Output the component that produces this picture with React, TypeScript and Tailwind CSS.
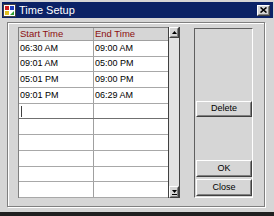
import React from "react";

const rows: [string, string][] = [
  ["06:30 AM", "09:00 AM"],
  ["09:01 AM", "05:00 PM"],
  ["05:01 PM", "09:00 PM"],
  ["09:01 PM", "06:29 AM"],
  ["", ""],
  ["", ""],
  ["", ""],
  ["", ""],
  ["", ""],
  ["", ""],
];

const font = { fontFamily: '"Liberation Sans", Arial, sans-serif' };

const Raised = ({ className = "", children }: { className?: string; children?: React.ReactNode }) => (
  <div className={`border border-t-white border-l-white border-r-[#404040] border-b-[#404040] bg-[#d6d6d6] ${className}`}>
    <div className="w-full h-full border border-t-[#d6d6d6] border-l-[#d6d6d6] border-r-[#808080] border-b-[#808080] flex items-center justify-center">
      {children}
    </div>
  </div>
);

const AppIcon = () => (
  <svg width="13" height="13" viewBox="0 0 13 13">
    <rect x="0.5" y="0.5" width="12" height="12" fill="#ffffff" stroke="#404040" />
    <rect x="2" y="2" width="4" height="4" fill="#d02020" />
    <rect x="7" y="2" width="4" height="4" fill="#2040c0" />
    <rect x="2" y="7" width="4" height="4" fill="#e0c020" />
    <path d="M7 11 L11 7 L11 11 Z" fill="#30a030" />
  </svg>
);

export default function App() {
  return (
    <div
      className="w-[274px] h-[216px] bg-[#d6d6d6] flex flex-col pt-[2px] pl-[2px] pr-[1px] border-b-[4px] border-b-[#202020]"
      style={font}
    >
      {/* title bar */}
      <div className="h-[16px] bg-[#0b2266] flex items-center pl-[1px] pr-[3px]">
        <AppIcon />
        <span className="ml-[3px] text-white text-[11px] leading-none">Time Setup</span>
        <div className="flex-1" />
        <Raised className="w-[13px] h-[11px]">
          <svg width="7" height="6" viewBox="0 0 7 6">
            <path d="M0.5 0.5 L6.5 5.5 M6.5 0.5 L0.5 5.5" stroke="#000" strokeWidth="1.6" />
          </svg>
        </Raised>
      </div>

      {/* body */}
      <div className="flex-1 pt-[4px] pl-[5px] pr-[8px] pb-[5px] flex">
        <div className="flex-1 border border-[#808080] shadow-[inset_1px_1px_0_#ffffff,1px_1px_0_#ffffff]">
          <div className="flex pl-[10px] pt-[4px]">
            {/* table */}
            <div className="flex h-[171px]">
              <div className="w-[150px] flex flex-col border-l border-t border-[#808080] bg-white">
                <div className="h-[13px] flex bg-[#d6d6d6] border-b border-[#a0a0a0]">
                  <div className="w-[75px] border-r border-[#a0a0a0] text-[9.5px] leading-[12px] text-[#8c0f0f] pl-[1px]">
                    Start Time
                  </div>
                  <div className="flex-1 text-[9.5px] leading-[12px] text-[#8c0f0f] pl-[1px]">End Time</div>
                </div>
                {rows.map((r, i) => (
                  <div
                    key={i}
                    className={`h-[15.7px] flex border-b ${i === 4 ? "border-[#707070]" : "border-[#a8a8a8]"}`}
                  >
                    <div className="w-[75px] border-r border-[#a0a0a0] text-[9px] text-black pl-[1px] flex items-center">
                      {i === 4 ? <div className="ml-[1px] w-[1px] h-[11px] bg-[#404040]" /> : r[0]}
                    </div>
                    <div className="flex-1 text-[9px] text-black pl-[1px] flex items-center">{r[1]}</div>
                  </div>
                ))}
              </div>
              {/* scrollbar */}
              <div className="w-[12px] flex flex-col border-l border-r border-[#404040]">
                <Raised className="h-[11px] w-full">
                  <svg width="5" height="3" viewBox="0 0 5 3">
                    <path d="M2.5 0 L5 3 L0 3 Z" fill="#000" />
                  </svg>
                </Raised>
                <div className="flex-1 bg-[#e2e2e2]" />
                <Raised className="h-[12px] w-full">
                  <svg width="5" height="5" viewBox="0 0 5 5">
                    <path d="M0 0 L5 0 L2.5 3 Z" fill="#000" />
                    <rect x="0" y="4" width="5" height="1" fill="#000" />
                  </svg>
                </Raised>
              </div>
            </div>

            {/* right panel */}
            <div className="ml-[14px] mt-[1px] w-[59px] h-[170px] border border-t-[#606060] border-l-[#606060] border-r-white border-b-white flex flex-col px-[1px] pt-[72px] pb-[1px]">
              <Raised className="h-[16px] w-[56px]">
                <span className="text-[9px] text-black">Delete</span>
              </Raised>
              <div className="flex-1" />
              <Raised className="h-[17px] w-[56px]">
                <span className="text-[9px] text-black">OK</span>
              </Raised>
              <Raised className="h-[17px] w-[56px] mt-[2px]">
                <span className="text-[9px] text-black">Close</span>
              </Raised>
            </div>
          </div>
        </div>
      </div>
    </div>
  );
}
